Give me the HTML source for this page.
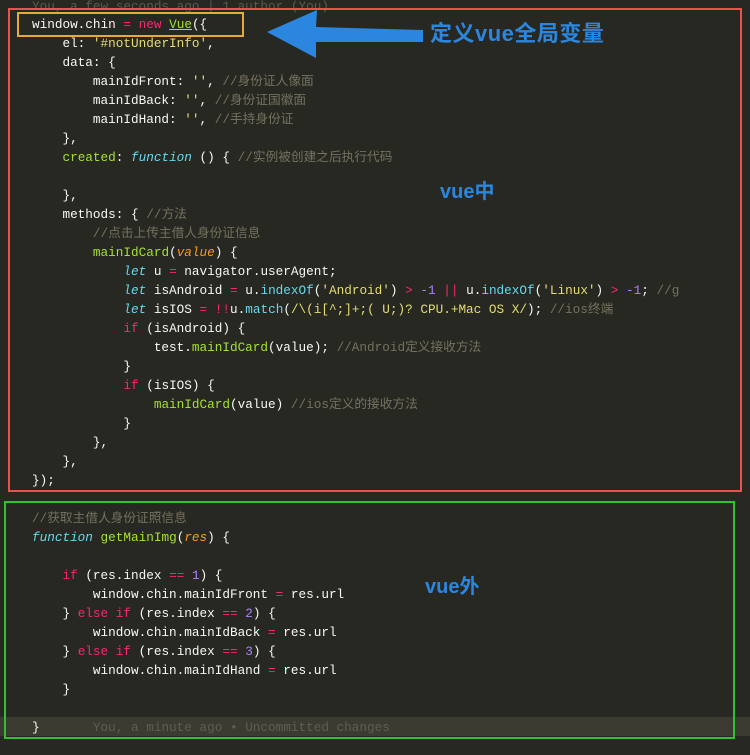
<!DOCTYPE html>
<html><head><meta charset="utf-8"><style>
html,body{margin:0;padding:0;background:#272822;width:750px;height:755px;overflow:hidden;position:relative}
.c{position:absolute;left:32px;font-family:"Liberation Mono","Noto Sans CJK SC",monospace;font-size:12.7px;line-height:19px;color:#f8f8f2;white-space:pre}
.k{color:#f92672}.g{color:#a6e22e}.f{color:#66d9ef;font-style:italic}.s{color:#e6db74}.m{color:#75715e}.p{color:#fd971f;font-style:italic}.n{color:#ae81ff}.b{color:#66d9ef}
.box{position:absolute;box-sizing:border-box}
.lbl{position:absolute;color:#2b86e0;font-family:"Liberation Sans","Noto Sans CJK SC",sans-serif;font-weight:bold;font-size:20px;line-height:24px}
</style></head><body>
<div class="box" style="left:0;top:717px;width:750px;height:19px;background:#3b3b31"></div>
<div class="c" style="top:-3px;color:#5a5a50">You, a few seconds ago | 1 author (You)</div>
<div class="c" style="top:15px">window.chin <span class="k">=</span> <span class="k">new</span> <span class="g" style="text-decoration:underline">Vue</span>({
    el: <span class="s">'#notUnderInfo'</span>,
    data: {
        mainIdFront: <span class="s">''</span>, <span class="m">//身份证人像面</span>
        mainIdBack: <span class="s">''</span>, <span class="m">//身份证国徽面</span>
        mainIdHand: <span class="s">''</span>, <span class="m">//手持身份证</span>
    },
    <span class="g">created</span>: <span class="f">function</span> () { <span class="m">//实例被创建之后执行代码</span>

    },
    methods: { <span class="m">//方法</span>
        <span class="m">//点击上传主借人身份证信息</span>
        <span class="g">mainIdCard</span>(<span class="p">value</span>) {
            <span class="f">let</span> u <span class="k">=</span> navigator.userAgent;
            <span class="f">let</span> isAndroid <span class="k">=</span> u.<span class="b">indexOf</span>(<span class="s">'Android'</span>) <span class="k">&gt;</span> <span class="n">-1</span> <span class="k">||</span> u.<span class="b">indexOf</span>(<span class="s">'Linux'</span>) <span class="k">&gt;</span> <span class="n">-1</span>; <span class="m">//g</span>
            <span class="f">let</span> isIOS <span class="k">=</span> <span class="k">!!</span>u.<span class="b">match</span>(<span class="s">/\(i[^;]+;( U;)? CPU.+Mac OS X/</span>); <span class="m">//ios终端</span>
            <span class="k">if</span> (isAndroid) {
                test.<span class="g">mainIdCard</span>(value); <span class="m">//Android定义接收方法</span>
            }
            <span class="k">if</span> (isIOS) {
                <span class="g">mainIdCard</span>(value) <span class="m">//ios定义的接收方法</span>
            }
        },
    },
});</div>
<div class="c" style="top:509px"><span class="m">//获取主借人身份证照信息</span>
<span class="f">function</span> <span class="g">getMainImg</span>(<span class="p">res</span>) {

    <span class="k">if</span> (res.index <span class="k">==</span> <span class="n">1</span>) {
        window.chin.mainIdFront <span class="k">=</span> res.url
    } <span class="k">else</span> <span class="k">if</span> (res.index <span class="k">==</span> <span class="n">2</span>) {
        window.chin.mainIdBack <span class="k">=</span> res.url
    } <span class="k">else</span> <span class="k">if</span> (res.index <span class="k">==</span> <span class="n">3</span>) {
        window.chin.mainIdHand <span class="k">=</span> res.url
    }

}       <span style="color:#5e5e52">You, a minute ago • Uncommitted changes</span></div>
<div class="box" style="left:8px;top:8px;width:734px;height:484px;border:2px solid #e8534a"></div>
<div class="box" style="left:4px;top:501px;width:731px;height:238px;border:2px solid #2fc12f"></div>
<div class="box" style="left:17px;top:12px;width:227px;height:25px;border:2px solid #e8a93a"></div>
<svg style="position:absolute;left:0;top:0" width="750" height="70"><polygon points="267,32 317,10 316,27 423,30 423,42 316,42 316,58" fill="#2b86e0"/></svg>
<div class="lbl" style="left:430px;top:22px;font-size:22px;letter-spacing:0.5px">定义vue全局变量</div>
<div class="lbl" style="left:440px;top:180px">vue中</div>
<div class="lbl" style="left:425px;top:575px">vue外</div>
</body></html>
